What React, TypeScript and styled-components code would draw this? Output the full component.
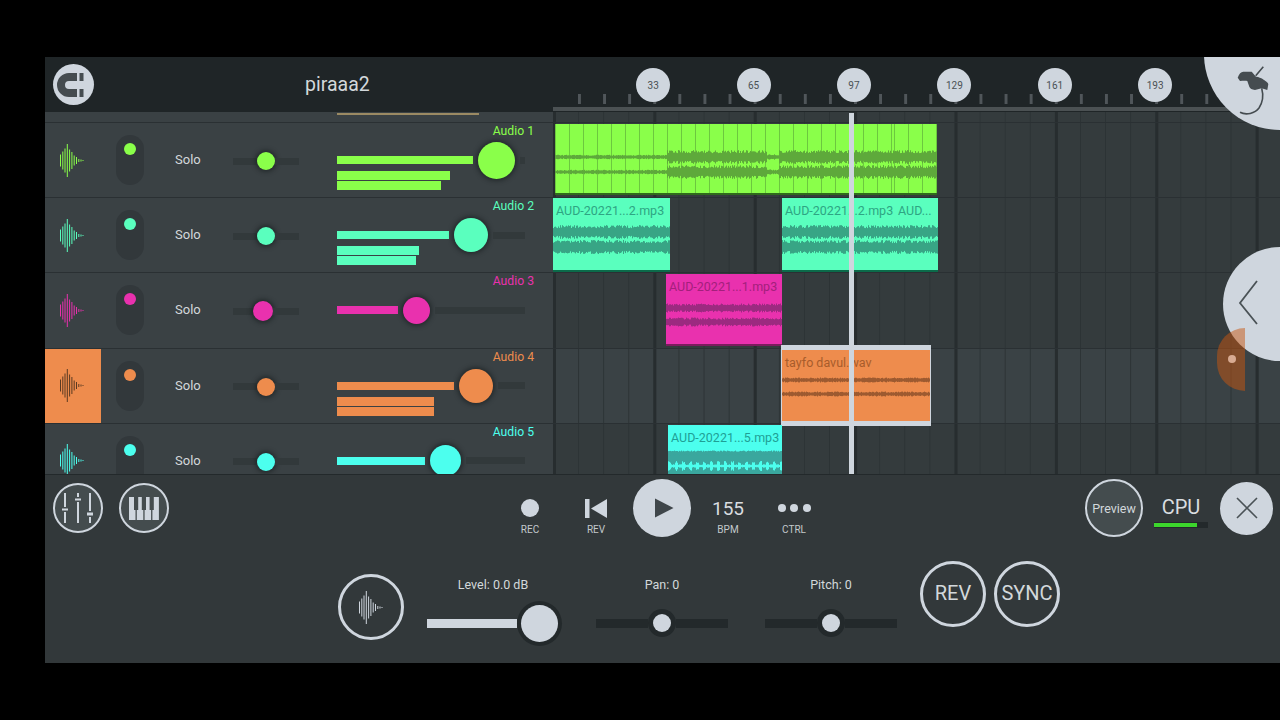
import React from "react";
import styled, { createGlobalStyle } from "styled-components";

const LIGHT = "#cfd6de";
const BEAT = 25.1;

const GlobalStyle = createGlobalStyle`
  html, body {
    margin: 0;
    padding: 0;
    background: #000;
    font-family: Roboto, "Liberation Sans", sans-serif;
  }
`;

const Page = styled.div`
  width: 1280px;
  height: 720px;
  padding: 57px 0 0 45px;
  box-sizing: border-box;
  overflow: hidden;
`;

const Screen = styled.div`
  position: relative;
  width: 1235px;
  height: 606px;
  background: #32383a;
  overflow: hidden;
  display: flex;
  flex-direction: column;
`;

const Header = styled.header`
  flex: none;
  height: 55px;
  display: flex;
  background: #1f2527;
`;

const HeaderLeft = styled.div`
  width: 508px;
  display: flex;
  align-items: center;
  padding-left: 8px;
  box-sizing: border-box;
`;

const MagnetButton = styled.div`
  width: 41px;
  height: 41px;
  margin-top: -1px;
  border-radius: 50%;
  background: ${LIGHT};
`;

const Title = styled.div`
  margin-left: 211px;
  margin-top: -1px;
  color: #d3d8db;
  font-size: 19.5px;
`;

const Ruler = styled.div`
  position: relative;
  flex: 1;
  display: flex;
  padding: 11px 0 0 50px;
  box-sizing: border-box;
  background: linear-gradient(#4b5153, #4b5153) no-repeat 0 50px / 677px 4px;

  &::before {
    content: "";
    position: absolute;
    left: 25px;
    right: 0;
    top: 37px;
    height: 10px;
    background: linear-gradient(90deg, #50565a 0 3px, transparent 3px) 0 0 / ${BEAT}px 100%;
  }
`;

const RulerCell = styled.div`
  position: relative;
  flex: none;
  width: 100.4px;
  display: flex;
  justify-content: center;
`;

const RulerMark = styled.div`
  width: 34px;
  height: 34px;
  border-radius: 50%;
  background: ${LIGHT};
  color: #4a5154;
  font-size: 10px;
  display: flex;
  align-items: center;
  justify-content: center;
`;

const Middle = styled.div`
  position: relative;
  flex: none;
  height: 363px;
  display: flex;
  overflow: hidden;
  border-bottom: 1px solid #23292b;
  box-sizing: border-box;
`;

const Tracks = styled.div`
  flex: none;
  width: 508px;
  background: #3a4144;
`;

const PartialRow = styled.div`
  height: 10px;
  padding: 1px 0 0 292px;
  box-sizing: border-box;
`;

const PartialBar = styled.div`
  width: 142px;
  height: 2px;
  background: #9b8a63;
`;

const Row = styled.div`
  height: 75.2px;
  box-sizing: border-box;
  border-top: 1px solid #2a3033;
  display: flex;
  align-items: flex-start;
`;

const IconCell = styled.div<{ $active: boolean }>`
  flex: none;
  width: 56px;
  height: 100%;
  display: flex;
  align-items: center;
  padding-left: 15px;
  box-sizing: border-box;
  background: ${(p) => (p.$active ? "#ee8c4d" : "transparent")};
`;

const Pill = styled.div`
  flex: none;
  width: 28px;
  height: 50px;
  margin: 12px 0 0 15px;
  padding-top: 8px;
  box-sizing: border-box;
  border-radius: 14px;
  background: #32383b;
  display: flex;
  justify-content: center;
`;

const PillDot = styled.div<{ $color: string }>`
  width: 12px;
  height: 12px;
  border-radius: 50%;
  background: ${(p) => p.$color};
`;

const Solo = styled.div`
  flex: none;
  width: 58px;
  margin: 29px 0 0 31px;
  color: #d3d8db;
  font-size: 13px;
  line-height: 16px;
`;

const Pan = styled.div`
  flex: none;
  width: 66px;
  height: 20px;
  margin-top: 28px;
  display: flex;
  align-items: center;
`;

const Level = styled.div`
  flex: none;
  width: 198px;
  margin: 1px 0 0 38px;
`;

const TrackName = styled.div<{ $color: string }>`
  height: 14px;
  padding-right: 1px;
  text-align: right;
  color: ${(p) => p.$color};
  font-size: 12.2px;
  line-height: 14px;
`;

const LevelSlider = styled.div`
  width: 188px;
  height: 26px;
  margin: 9px 0 -2px;
  display: flex;
  align-items: center;
`;

const Fill = styled.div<{ $w: number; $color: string; $h?: number }>`
  flex: none;
  width: ${(p) => p.$w}px;
  height: ${(p) => p.$h ?? 8}px;
  background: ${(p) => p.$color};
`;

const Rest = styled.div<{ $h?: number; $color?: string; $w?: number }>`
  flex: ${(p) => (p.$w ? `0 0 ${p.$w}px` : "1")};
  height: ${(p) => p.$h ?? 7}px;
  background: ${(p) => p.$color ?? "#32393b"};
`;

const Knob = styled.div<{ $size: number; $color: string; $gap?: number }>`
  flex: none;
  width: ${(p) => p.$size}px;
  height: ${(p) => p.$size}px;
  margin: 0 ${(p) => p.$gap ?? 0}px;
  border-radius: 50%;
  background: ${(p) => p.$color};
  box-shadow: 0 0 4px 2px rgba(20, 26, 28, 0.55);
`;

const Meter = styled.div<{ $w: number; $color: string }>`
  width: ${(p) => p.$w}px;
  height: 9px;
  margin-bottom: 1px;
  background: ${(p) => p.$color};
`;

const Arrangement = styled.div`
  position: relative;
  flex: 1;
`;

const gridLines = `
  linear-gradient(90deg, #272d2f 0 2.5px, transparent 2.5px) 0 0 / ${BEAT * 4}px 100%,
  linear-gradient(90deg, #2c3335 0 1px, transparent 1px) 0 0 / ${BEAT}px 100%
`;

const Lane = styled.div<{ $selected?: boolean }>`
  position: relative;
  height: 75.2px;
  box-sizing: border-box;
  border-top: 1px solid #2a3033;
  background: ${gridLines}, ${(p) => (p.$selected ? "#3a4245" : "#343b3d")};
`;

const PartialLane = styled(Lane)`
  height: 10px;
  border-top: 0;
`;

const Clip = styled.div<{
  $left: number;
  $top: number;
  $width: number;
  $height: number;
  $color: string;
  $edge: string;
  $ticks?: boolean;
  $selected?: boolean;
}>`
  position: absolute;
  left: ${(p) => p.$left}px;
  top: ${(p) => p.$top}px;
  width: ${(p) => p.$width}px;
  height: ${(p) => p.$height}px;
  box-sizing: border-box;
  overflow: hidden;
  z-index: 1;
  background-color: ${(p) => p.$color};
  background-image: ${(p) =>
    p.$ticks ? "linear-gradient(90deg, #6cc83f 0 1px, transparent 1px)" : "none"};
  background-size: 14px 100%;
  border-bottom: 2px solid ${(p) => p.$edge};
  ${(p) => (p.$selected ? `border: 1px solid ${LIGHT}; border-width: 5px 1px;` : "")}
`;

const ClipName = styled.div<{ $color: string }>`
  position: relative;
  padding: 6px 0 0 3px;
  color: ${(p) => p.$color};
  font-size: 12.5px;
  line-height: 14px;
  white-space: nowrap;
`;

const ClipWave = styled.svg`
  position: absolute;
  left: 0;
  top: 0;
`;

const Playhead = styled.div`
  position: absolute;
  left: 296px;
  top: 1px;
  bottom: 0;
  width: 5px;
  background: ${LIGHT};
  z-index: 2;
`;

const BottomPanel = styled.div`
  flex: 1;
`;

const TopControls = styled.div`
  height: 66px;
  display: flex;
  align-items: center;
  padding: 0 7px 0 8px;
`;

const RoundButton = styled.div<{ $size: number; $thick?: boolean; $filled?: boolean }>`
  flex: none;
  width: ${(p) => p.$size}px;
  height: ${(p) => p.$size}px;
  box-sizing: border-box;
  border-radius: 50%;
  border: ${(p) => (p.$thick ? 3 : 2)}px solid ${LIGHT};
  background: ${(p) => (p.$filled ? "#444c4e" : "transparent")};
  color: #d3d8db;
  display: flex;
  align-items: center;
  justify-content: center;
`;

const ButtonGroup = styled.div`
  display: flex;
  gap: 16px;
`;

const Transport = styled.div`
  display: flex;
  margin-left: 328px;
`;

const TransportCell = styled.div`
  width: 66px;
  height: 66px;
  padding-top: 18px;
  box-sizing: border-box;
  display: flex;
  flex-direction: column;
  align-items: center;
`;

const Slot = styled.div`
  flex: none;
  height: 30px;
  display: flex;
  align-items: center;
  justify-content: center;
`;

const TinyLabel = styled.div`
  margin-top: 1px;
  color: #c3c9cc;
  font-size: 10px;
  line-height: 12px;
`;

const RecDot = styled.div`
  width: 18px;
  height: 18px;
  border-radius: 50%;
  background: ${LIGHT};
`;

const PlayButton = styled.div`
  flex: none;
  width: 58px;
  height: 58px;
  padding-left: 3px;
  box-sizing: border-box;
  border-radius: 50%;
  background: ${LIGHT};
  display: flex;
  align-items: center;
  justify-content: center;
`;

const Bpm = styled.div`
  color: #d9dde0;
  font-size: 19px;
`;

const Dots = styled.div`
  display: flex;
  gap: 4.5px;
`;

const Dot = styled.div`
  width: 8px;
  height: 8px;
  border-radius: 50%;
  background: ${LIGHT};
`;

const RightControls = styled.div`
  margin-left: auto;
  display: flex;
  align-items: center;
`;

const PreviewText = styled.span`
  font-size: 12.5px;
`;

const CpuBlock = styled.div`
  width: 54px;
  margin: 0 12px 0 11px;
  display: flex;
  flex-direction: column;
  align-items: center;
`;

const CpuText = styled.div`
  color: #d9dde0;
  font-size: 20px;
  line-height: 24px;
  margin-top: 6px;
`;

const CpuMeter = styled.div`
  width: 54px;
  height: 6px;
  margin-top: 3px;
  background: #23292b;
`;

const CpuFill = styled.div`
  width: 43px;
  height: 4px;
  margin-top: 1px;
  background: #3cd62c;
`;

const CloseButton = styled.div`
  width: 53px;
  height: 53px;
  border-radius: 50%;
  background: ${LIGHT};
  display: flex;
  align-items: center;
  justify-content: center;
`;

const LowerControls = styled.div`
  margin-top: 20px;
  padding-left: 293px;
  display: flex;
  align-items: flex-start;
`;

const WaveButton = styled(RoundButton)`
  margin-top: 13px;
`;

const SliderBlock = styled.div<{ $first?: boolean }>`
  flex: none;
  width: 132px;
  margin: 17px 0 0 ${(p) => (p.$first ? 23 : 37)}px;
`;

const SliderLabel = styled.div`
  height: 14px;
  text-align: center;
  color: #d3d8db;
  font-size: 12.5px;
  line-height: 14px;
`;

const SliderRow = styled.div`
  height: 40px;
  margin-top: 11px;
  display: flex;
  align-items: center;
`;

const PanelKnob = styled.div<{ $size: number; $ring: number }>`
  flex: none;
  width: ${(p) => p.$size}px;
  height: ${(p) => p.$size}px;
  margin: 0 ${(p) => p.$ring}px;
  border-radius: 50%;
  background: ${LIGHT};
  box-shadow: 0 0 0 ${(p) => p.$ring}px #23292b;
`;

const LargeButtons = styled.div`
  margin-left: 23px;
  display: flex;
  gap: 8px;
`;

const LargeText = styled.span`
  margin-top: -3px;
  font-size: 20px;
`;

const CornerDisc = styled.div`
  position: absolute;
  left: 1159px;
  top: -79px;
  width: 152px;
  height: 152px;
  border-radius: 50%;
  background: ${LIGHT};
  z-index: 3;
`;

const FruitLogo = styled.svg`
  position: absolute;
  left: 30px;
  top: 88px;
`;

const SideDisc = styled.div`
  position: absolute;
  left: 1178px;
  top: 190px;
  width: 114px;
  height: 114px;
  border-radius: 50%;
  background: ${LIGHT};
  z-index: 3;
`;

const Chevron = styled.svg`
  position: absolute;
  left: 15px;
  top: 33px;
`;

const HalfDisc = styled.div`
  position: absolute;
  left: 1172px;
  top: 271px;
  width: 28px;
  height: 63px;
  border-radius: 31px 0 0 31px;
  background: rgba(200, 85, 15, 0.5);
  z-index: 4;
`;

const HalfDiscDot = styled.div`
  position: absolute;
  left: 11px;
  top: 27px;
  width: 8px;
  height: 8px;
  border-radius: 50%;
  background: #d8ab92;
`;

const MagnetIcon = () => (
  <svg width="41" height="41" viewBox="0 0 41 41">
    <path d="M24 13H16a8 8 0 0 0 0 16H24" fill="none" stroke="#454c50" strokeWidth="8" />
    <rect x="26.5" y="9" width="4" height="8" fill="#454c50" />
    <rect x="26.5" y="25" width="4" height="8" fill="#454c50" />
  </svg>
);

const BARS = [
  [0.5, 12],
  [2.8, 18],
  [5, 24],
  [7.3, 33],
  [9.6, 22],
  [11.9, 17],
  [14.2, 10],
  [16.5, 7],
  [18.8, 3],
  [21, 2],
  [23, 1],
];

const WaveIcon = ({ color }: { color: string }) => (
  <svg width="24" height="33" viewBox="0 0 24 33">
    {BARS.map(([x, h]) => (
      <line key={x} x1={x} x2={x} y1={16.5 - h / 2} y2={16.5 + h / 2} stroke={color} strokeWidth="1" />
    ))}
  </svg>
);

// small seeded generator so the clip waveforms stay the same between runs
const noise = (seed: number) => {
  let s = seed;
  return () => {
    s = (s * 16807) % 2147483647;
    return (s % 1000) / 1000;
  };
};

type WaveSpec = {
  y: number[];
  amp: number;
  color: string;
  seed: number;
  shape?: (x: number) => number;
};

const Waveform = ({ w, h, spec }: { w: number; h: number; spec: WaveSpec }) => {
  const rand = noise(spec.seed);
  let d = "";
  for (let x = 0.5; x < w; x += 1) {
    const gain = spec.shape ? spec.shape(x) : 1;
    spec.y.forEach((cy) => {
      const a = spec.amp * gain * (0.55 + 0.45 * rand());
      d += `M${x} ${(cy - a).toFixed(1)}V${(cy + a).toFixed(1)}`;
    });
  }
  return (
    <ClipWave width={w} height={h}>
      <path d={d} stroke={spec.color} strokeWidth="1" fill="none" />
    </ClipWave>
  );
};

const CyanWave = ({ w, h }: { w: number; h: number }) => (
  <>
    <ClipWave width={w} height={h}>
      <rect x="0" y="29" width={w} height={h - 29} fill="#3aa79e" />
    </ClipWave>
    <Waveform w={w} h={h} spec={{ y: [28], amp: 2.5, color: "#3aa79e", seed: 91 }} />
    <Waveform
      w={w}
      h={h}
      spec={{ y: [41], amp: 5, color: "#4cffee", seed: 37, shape: (x) => (x % 7 < 3 ? 1 : 0.35) }}
    />
  </>
);

const MixerIcon = () => (
  <svg width="36" height="32" viewBox="0 0 36 32" stroke={LIGHT} strokeWidth="2" fill="none">
    <path d="M5 1V15M5 20V31M2 17.5H8" />
    <path d="M18 1V5M18 10V31M15 7.5H21" />
    <path d="M30 1V19M30 25V31" />
    <path d="M27 22H33" strokeWidth="3" />
  </svg>
);

const KeysIcon = () => (
  <svg width="30" height="23" viewBox="0 0 30 23" fill={LIGHT}>
    <rect x="0" y="0" width="6.5" height="23" />
    <rect x="7.8" y="0" width="6.5" height="23" />
    <rect x="15.6" y="0" width="6.5" height="23" />
    <rect x="23.4" y="0" width="6.5" height="23" />
    <rect x="5" y="0" width="4.2" height="13" fill="#444c4e" />
    <rect x="12.8" y="0" width="4.2" height="13" fill="#444c4e" />
    <rect x="20.6" y="0" width="4.2" height="13" fill="#444c4e" />
  </svg>
);

type ClipData = {
  left: number;
  top: number;
  width: number;
  height: number;
  name?: string;
  selected?: boolean;
  ticks?: boolean;
  cyan?: boolean;
  wave?: WaveSpec;
};

type TrackData = {
  name: string;
  color: string;
  edge: string;
  ink: string;
  fill: number;
  knob: number;
  panLeft: number;
  panSize: number;
  meters: number[];
  clips: ClipData[];
};

const GREEN_WAVE = "#5ea93b";
const MINT_WAVE = "#38a585";

const tracks: TrackData[] = [
  {
    name: "Audio 1",
    color: "#8aff4a",
    edge: "#2f6a1c",
    ink: "#5ea93b",
    fill: 136,
    knob: 37,
    panLeft: 24,
    panSize: 18,
    meters: [113, 104],
    clips: [
      {
        left: 2,
        top: 1,
        width: 339,
        height: 71,
        ticks: true,
        wave: {
          y: [33, 48],
          amp: 7,
          color: GREEN_WAVE,
          seed: 11,
          shape: (x) => (x < 112 ? 0.32 : x > 212 && x < 224 ? 0.4 : 1),
        },
      },
      {
        left: 341,
        top: 1,
        width: 43,
        height: 71,
        ticks: true,
        wave: { y: [33, 48], amp: 7, color: GREEN_WAVE, seed: 23 },
      },
    ],
  },
  {
    name: "Audio 2",
    color: "#5affbe",
    edge: "#0b6b4a",
    ink: "#2ea583",
    fill: 112,
    knob: 34,
    panLeft: 24,
    panSize: 18,
    meters: [82, 79],
    clips: [
      {
        left: 0,
        top: 0,
        width: 117,
        height: 74,
        name: "AUD-20221...2.mp3",
        wave: { y: [34, 49], amp: 7, color: MINT_WAVE, seed: 31 },
      },
      {
        left: 229,
        top: 0,
        width: 113,
        height: 74,
        name: "AUD-20221...2.mp3",
        wave: { y: [34, 49], amp: 7, color: MINT_WAVE, seed: 41 },
      },
      {
        left: 342,
        top: 0,
        width: 43,
        height: 74,
        name: "AUD...",
        wave: { y: [34, 49], amp: 7, color: MINT_WAVE, seed: 43 },
      },
    ],
  },
  {
    name: "Audio 3",
    color: "#e931ae",
    edge: "#7c1c5e",
    ink: "#a3207c",
    fill: 61,
    knob: 27,
    panLeft: 20,
    panSize: 20,
    meters: [],
    clips: [
      {
        left: 113,
        top: 1,
        width: 116,
        height: 72,
        name: "AUD-20221...1.mp3",
        wave: { y: [34, 48], amp: 4.5, color: "#9c2a80", seed: 53 },
      },
    ],
  },
  {
    name: "Audio 4",
    color: "#ee8c4d",
    edge: "#ee8c4d",
    ink: "#a85c2b",
    fill: 117,
    knob: 34,
    panLeft: 24,
    panSize: 18,
    meters: [97, 97],
    clips: [
      {
        left: 228,
        top: -4,
        width: 150,
        height: 81,
        name: "tayfo davul.wav",
        selected: true,
        wave: { y: [30, 44], amp: 2.5, color: "#9d5a30", seed: 61 },
      },
    ],
  },
  {
    name: "Audio 5",
    color: "#4cffee",
    edge: "#4cffee",
    ink: "#1f9f96",
    fill: 88,
    knob: 31,
    panLeft: 24,
    panSize: 18,
    meters: [],
    clips: [
      {
        left: 115,
        top: 1,
        width: 114,
        height: 51,
        name: "AUD-20221...5.mp3",
        cyan: true,
      },
    ],
  },
];

const marks = [33, 65, 97, 129, 161, 193];

const App = () => {
  return (
    <Page>
      <GlobalStyle />
      <Screen>
        <Header>
          <HeaderLeft>
            <MagnetButton>
              <MagnetIcon />
            </MagnetButton>
            <Title>piraaa2</Title>
          </HeaderLeft>
          <Ruler>
            {marks.map((m) => (
              <RulerCell key={m}>
                <RulerMark>{m}</RulerMark>
              </RulerCell>
            ))}
          </Ruler>
        </Header>

        <Middle>
          <Tracks>
            <PartialRow>
              <PartialBar />
            </PartialRow>
            {tracks.map((t, i) => (
              <Row key={t.name}>
                <IconCell $active={i === 3}>
                  <WaveIcon color={i === 3 ? "#5a3a22" : t.color} />
                </IconCell>
                <Pill>
                  <PillDot $color={t.color} />
                </Pill>
                <Solo>Solo</Solo>
                <Pan>
                  <Rest $w={t.panLeft} />
                  <Knob $size={t.panSize} $color={t.color} />
                  <Rest />
                </Pan>
                <Level>
                  <TrackName $color={t.color}>{t.name}</TrackName>
                  <LevelSlider>
                    <Fill $w={t.fill} $color={t.color} />
                    <Knob $size={t.knob} $color={t.color} $gap={5} />
                    <Rest />
                  </LevelSlider>
                  {t.meters.map((w, j) => (
                    <Meter key={j} $w={w} $color={t.color} />
                  ))}
                </Level>
              </Row>
            ))}
          </Tracks>

          <Arrangement>
            <PartialLane />
            {tracks.map((t, i) => (
              <Lane key={t.name} $selected={i === 3}>
                {t.clips.map((c) => (
                  <Clip
                    key={c.left}
                    $left={c.left}
                    $top={c.top}
                    $width={c.width}
                    $height={c.height}
                    $color={t.color}
                    $edge={t.edge}
                    $ticks={c.ticks}
                    $selected={c.selected}
                  >
                    {c.wave && <Waveform w={c.width} h={c.height} spec={c.wave} />}
                    {c.cyan && <CyanWave w={c.width} h={c.height} />}
                    {c.name && <ClipName $color={t.ink}>{c.name}</ClipName>}
                  </Clip>
                ))}
              </Lane>
            ))}
            <Playhead />
          </Arrangement>
        </Middle>

        <BottomPanel>
          <TopControls>
            <ButtonGroup>
              <RoundButton $size={50} $filled>
                <MixerIcon />
              </RoundButton>
              <RoundButton $size={50} $filled>
                <KeysIcon />
              </RoundButton>
            </ButtonGroup>
            <Transport>
              <TransportCell>
                <Slot>
                  <RecDot />
                </Slot>
                <TinyLabel>REC</TinyLabel>
              </TransportCell>
              <TransportCell>
                <Slot>
                  <svg width="22" height="19" viewBox="0 0 22 19" fill={LIGHT}>
                    <rect x="0" y="0" width="4.5" height="19" />
                    <path d="M22 0V19L6 9.5Z" />
                  </svg>
                </Slot>
                <TinyLabel>REV</TinyLabel>
              </TransportCell>
              <TransportCell>
                <Slot>
                  <PlayButton>
                    <svg width="20" height="20" viewBox="0 0 20 20" fill="#3f464a">
                      <path d="M1 0.5V19.5L19.5 10Z" />
                    </svg>
                  </PlayButton>
                </Slot>
              </TransportCell>
              <TransportCell>
                <Slot>
                  <Bpm>155</Bpm>
                </Slot>
                <TinyLabel>BPM</TinyLabel>
              </TransportCell>
              <TransportCell>
                <Slot>
                  <Dots>
                    <Dot />
                    <Dot />
                    <Dot />
                  </Dots>
                </Slot>
                <TinyLabel>CTRL</TinyLabel>
              </TransportCell>
            </Transport>
            <RightControls>
              <RoundButton $size={58} $filled>
                <PreviewText>Preview</PreviewText>
              </RoundButton>
              <CpuBlock>
                <CpuText>CPU</CpuText>
                <CpuMeter>
                  <CpuFill />
                </CpuMeter>
              </CpuBlock>
              <CloseButton>
                <svg width="22" height="22" viewBox="0 0 22 22" stroke="#4a5256" strokeWidth="1.6">
                  <path d="M1 1L21 21M21 1L1 21" />
                </svg>
              </CloseButton>
            </RightControls>
          </TopControls>

          <LowerControls>
            <WaveButton $size={66} $thick>
              <WaveIcon color={LIGHT} />
            </WaveButton>
            <SliderBlock $first>
              <SliderLabel>Level: 0.0 dB</SliderLabel>
              <SliderRow>
                <Fill $w={90} $color={LIGHT} $h={9} />
                <PanelKnob $size={37} $ring={4} />
              </SliderRow>
            </SliderBlock>
            <SliderBlock>
              <SliderLabel>Pan: 0</SliderLabel>
              <SliderRow>
                <Rest $h={9} $color="#23292b" />
                <PanelKnob $size={18} $ring={5} />
                <Rest $h={9} $color="#23292b" />
              </SliderRow>
            </SliderBlock>
            <SliderBlock>
              <SliderLabel>Pitch: 0</SliderLabel>
              <SliderRow>
                <Rest $h={9} $color="#23292b" />
                <PanelKnob $size={18} $ring={5} />
                <Rest $h={9} $color="#23292b" />
              </SliderRow>
            </SliderBlock>
            <LargeButtons>
              <RoundButton $size={66} $thick>
                <LargeText>REV</LargeText>
              </RoundButton>
              <RoundButton $size={66} $thick>
                <LargeText>SYNC</LargeText>
              </RoundButton>
            </LargeButtons>
          </LowerControls>
        </BottomPanel>

        <CornerDisc>
          <FruitLogo width="40" height="55" viewBox="0 0 40 55">
            <path
              d="M3.7 11.7C5 8 7 5.7 9.3 5.7H17.7L22 10.7C25 11 27 12 28.7 13C31 15 34 16 34.3 18.3L33.3 24L27.7 22.3L21 24C18 23.5 16 22.5 15.3 20.7L13.3 15C11 14.5 8 15 6 15Z"
              fill="#454c50"
            />
            <path
              d="M29.3 0.7L21.7 9.7M27.7 22.3C29.5 29 29 36 25 42C21 47.5 12 49.5 6 46.3"
              fill="none"
              stroke="#454c50"
              strokeWidth="1.6"
            />
          </FruitLogo>
        </CornerDisc>
        <SideDisc>
          <Chevron width="20" height="45" viewBox="0 0 20 45" fill="none" stroke="#4a5256" strokeWidth="1.8">
            <path d="M19 1L2 23L19 44" />
          </Chevron>
        </SideDisc>
        <HalfDisc>
          <HalfDiscDot />
        </HalfDisc>
      </Screen>
    </Page>
  );
};

export default App;
